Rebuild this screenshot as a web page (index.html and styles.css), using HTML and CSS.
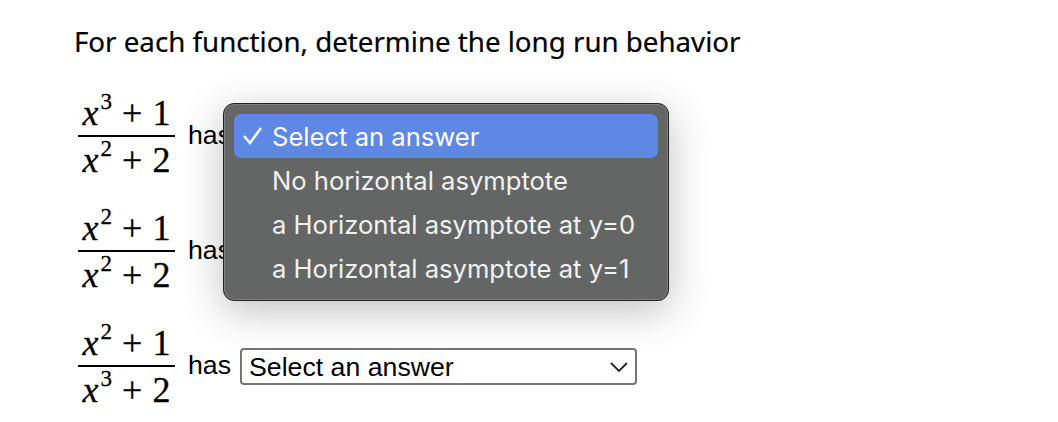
FILE: index.html
```html
<!DOCTYPE html>
<html lang="en">
<head>
  <meta charset="UTF-8">
  <title>Long run behavior</title>
  <link rel="stylesheet" href="styles.css">
</head>
<body>

  <p class="question">For each function, determine the long run behavior</p>

  <div class="row">
    <span class="frac">
      <span class="num"><i>x</i><sup>3</sup> + 1</span>
      <span class="den"><i>x</i><sup>2</sup> + 2</span>
    </span>
    <span class="has">has</span>
  </div>

  <div class="row">
    <span class="frac">
      <span class="num"><i>x</i><sup>2</sup> + 1</span>
      <span class="den"><i>x</i><sup>2</sup> + 2</span>
    </span>
    <span class="has">has</span>
  </div>

  <div class="row">
    <span class="frac">
      <span class="num"><i>x</i><sup>2</sup> + 1</span>
      <span class="den"><i>x</i><sup>3</sup> + 2</span>
    </span>
    <span class="has">has</span>
    <span class="select"><span class="select-label">Select an answer</span>
      <svg width="20" height="12" viewBox="0 0 20 12"><path d="M2 2l8 8 8-8" fill="none" stroke="#222" stroke-width="1.8"/></svg>
    </span>
  </div>

  <!-- open dropdown of the first select -->
  <ul class="menu">
    <li class="current">
      <svg class="check" width="20" height="18" viewBox="0 0 20 18"><path d="M1 9l6 7L18 1" fill="none" stroke="#f4f6fd" stroke-width="2.6"/></svg>
      Select an answer
    </li>
    <li>No horizontal asymptote</li>
    <li>a Horizontal asymptote at y=0</li>
    <li>a Horizontal asymptote at y=1</li>
  </ul>

</body>
</html>
```

FILE: styles.css
```css
body {
  margin: 0;
  padding: 21px 0 0 74px;
  background-color: #fff;
  color: #000;
  font-family: "Liberation Sans", Arial, sans-serif;
  overflow: hidden;
}

.question {
  margin: 0 0 18px;
  font-family: "Noto Sans", sans-serif;
  font-size: 27.7px;
  line-height: 40px;
  -webkit-text-stroke: 0.2px #000;
}

.row {
  display: flex;
  align-items: center;
  height: 115px;
}

.frac {
  display: inline-flex;
  flex-direction: column;
  width: 97px;
  margin: 0 13px 0 4px;
  font-family: "Liberation Serif", serif;
  font-size: 36px;
  text-align: center;
  white-space: nowrap;
  word-spacing: 1px;
  -webkit-text-stroke: 0.3px #000;
}

.num {
  line-height: 46px;
  height: 45px;
  border-bottom: 2px solid #000;
}

.den {
  line-height: 46px;
  height: 46px;
}

.frac i {
  margin-right: 2px;
}

.frac sup {
  font-size: 23px;
  line-height: 0;
  position: relative;
  top: -3px;
}

.has {
  font-size: 26.7px;
  margin-right: 9px;
  position: relative;
  top: -1px;
}

.select {
  display: flex;
  align-items: center;
  justify-content: space-between;
  box-sizing: border-box;
  width: 397px;
  height: 37px;
  padding: 0 6px 0 7px;
  border: 2px solid #767676;
  border-radius: 4px;
  font-size: 26.7px;
}

.select-label {
  position: relative;
  top: 1px;
}

.menu {
  position: absolute;
  left: 223px;
  top: 103px;
  box-sizing: border-box;
  width: 446px;
  height: 198px;
  margin: 0;
  padding: 10px;
  list-style: none;
  background-color: #646665;
  border: 1px solid #222;
  border-radius: 11px;
  box-shadow: inset 0 0 0 1px #7f807f, 0 10px 40px rgba(0, 0, 0, 0.25);
  color: #f2f2f2;
  font-family: "Inter", sans-serif;
  font-size: 25.6px;
}

.menu li {
  position: relative;
  height: 44px;
  line-height: 46px;
  padding-left: 38px;
}

.menu .current {
  background-color: #5f87e4;
  border-radius: 7px;
  color: #fff;
}

.check {
  position: absolute;
  left: 9px;
  top: 13px;
}
```
